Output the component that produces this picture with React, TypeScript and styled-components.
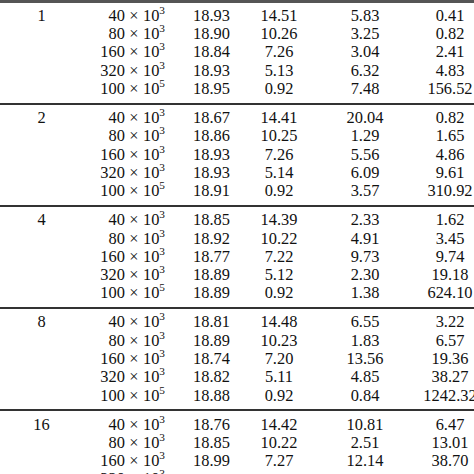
import styled, { createGlobalStyle } from "styled-components";

const GlobalStyle = createGlobalStyle`
  html, body {
    margin: 0;
    padding: 0;
    background: #fff;
    overflow: hidden;
  }
`;

const SPage = styled.div`
  width: 474px;
  height: 474px;
  overflow: hidden;
  background: #fff;
  color: #111;
  font-family: "Liberation Serif", "DejaVu Serif", serif;
  font-size: 16.4px;
  border-top: 3px solid #555;
  box-sizing: border-box;
`;

const SGroup = styled.div<{ $first?: boolean }>`
  padding: ${(p) => (p.$first ? "3.9px" : "4.35px")} 0 4.35px;
  border-top: ${(p) => (p.$first ? "none" : "2px solid #333")};
`;

const SRow = styled.div`
  display: grid;
  grid-template-columns: 83px 92px 73px 62px 110px 60px;
  height: 18.3px;
  line-height: 18.3px;
  white-space: nowrap;
`;

const SCell = styled.div<{ $align?: "center" | "right"; $pad?: number }>`
  text-align: ${(p) => p.$align || "center"};
  padding-right: ${(p) => p.$pad || 0}px;
`;

const STimes = styled.span`
  margin: 0 4.4px;
`;

const SSup = styled.sup`
  font-size: 11.3px;
  line-height: 0;
  vertical-align: 7.3px;
`;

type Row = [string, string, string, string, string, string];

const groups: { n: string; rows: Row[] }[] = [
  {
    n: "1",
    rows: [
      ["40", "3", "18.93", "14.51", "5.83", "0.41"],
      ["80", "3", "18.90", "10.26", "3.25", "0.82"],
      ["160", "3", "18.84", "7.26", "3.04", "2.41"],
      ["320", "3", "18.93", "5.13", "6.32", "4.83"],
      ["100", "5", "18.95", "0.92", "7.48", "156.52"],
    ],
  },
  {
    n: "2",
    rows: [
      ["40", "3", "18.67", "14.41", "20.04", "0.82"],
      ["80", "3", "18.86", "10.25", "1.29", "1.65"],
      ["160", "3", "18.93", "7.26", "5.56", "4.86"],
      ["320", "3", "18.93", "5.14", "6.09", "9.61"],
      ["100", "5", "18.91", "0.92", "3.57", "310.92"],
    ],
  },
  {
    n: "4",
    rows: [
      ["40", "3", "18.85", "14.39", "2.33", "1.62"],
      ["80", "3", "18.92", "10.22", "4.91", "3.45"],
      ["160", "3", "18.77", "7.22", "9.73", "9.74"],
      ["320", "3", "18.89", "5.12", "2.30", "19.18"],
      ["100", "5", "18.89", "0.92", "1.38", "624.10"],
    ],
  },
  {
    n: "8",
    rows: [
      ["40", "3", "18.81", "14.48", "6.55", "3.22"],
      ["80", "3", "18.89", "10.23", "1.83", "6.57"],
      ["160", "3", "18.74", "7.20", "13.56", "19.36"],
      ["320", "3", "18.82", "5.11", "4.85", "38.27"],
      ["100", "5", "18.88", "0.92", "0.84", "1242.32"],
    ],
  },
  {
    n: "16",
    rows: [
      ["40", "3", "18.76", "14.42", "10.81", "6.47"],
      ["80", "3", "18.85", "10.22", "2.51", "13.01"],
      ["160", "3", "18.99", "7.27", "12.14", "38.70"],
      ["320", "3", "", "", "", ""],
    ],
  },
];

export default function App() {
  return (
    <>
      <GlobalStyle />
      <SPage>
        {groups.map((g, gi) => (
          <SGroup key={g.n} $first={gi === 0}>
            {g.rows.map((r, ri) => (
              <SRow key={ri}>
                <SCell>{ri === 0 ? g.n : ""}</SCell>
                <SCell $align="right" $pad={10}>
                  {r[0]}
                  <STimes>×</STimes>10<SSup>{r[1]}</SSup>
                </SCell>
                <SCell>{r[2]}</SCell>
                <SCell>{r[3]}</SCell>
                <SCell>{r[4]}</SCell>
                <SCell>{r[5]}</SCell>
              </SRow>
            ))}
          </SGroup>
        ))}
      </SPage>
    </>
  );
}
